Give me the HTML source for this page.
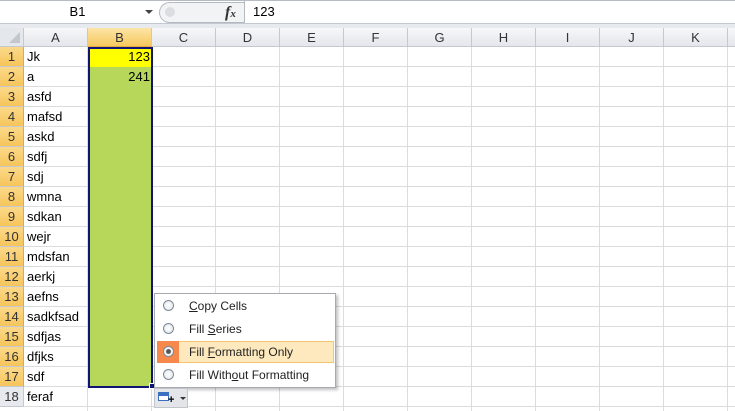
<!DOCTYPE html>
<html><head><meta charset="utf-8"><style>
*{margin:0;padding:0;box-sizing:border-box}
html,body{width:735px;height:411px;overflow:hidden}
body{background:#fff;font-family:"Liberation Sans",Arial,sans-serif;position:relative;font-size:13px;color:#000}
.a{position:absolute}
.grid{left:24px;top:47px;width:711px;height:364px;
background-image:linear-gradient(to right,transparent 63px,#dadcdd 63px),linear-gradient(to bottom,transparent 19px,#dadcdd 19px);
background-size:64px 20px,64px 20px}
.ch{top:28px;height:19px;background:linear-gradient(#f6f7f9,#e4e7eb);border-right:1px solid #c5c9cf;border-bottom:1px solid #c5c9cf;text-align:center;line-height:19px;color:#333;font-size:13px}
.rh{left:0;width:24px;height:20px;background:#e6e9ed;border-bottom:1px solid #c5c9cf;border-right:1px solid #c5c9cf;text-align:center;line-height:20px;color:#333;font-size:13px}
.rh.s{background:linear-gradient(#fbd98a,#f6c55b);border-right-color:#e2a93c}
.t{left:27px;height:20px;line-height:20px;font-size:13px}
.m{left:157px;height:22px;width:177px;line-height:22px;font-size:12px;color:#222;padding-left:32px}
.r{position:absolute;left:6px;top:5px;width:11px;height:11px;border-radius:50%;border:1px solid #7d8996;background:radial-gradient(#fff,#dfe3e8)}
u{text-decoration:underline}
</style></head><body>
<div class="a" style="left:0;top:0;width:735px;height:1px;background:#b7bcc4"></div>
<div class="a" style="left:0;top:23px;width:735px;height:5px;background:#e7eaee;border-top:1px solid #c4c9d0"></div>
<div class="a" style="left:0;top:1px;width:155px;height:22px;text-align:center;line-height:22px;font-size:13px">B1</div>
<div class="a" style="left:145px;top:10px;width:0;height:0;border-left:4px solid transparent;border-right:4px solid transparent;border-top:4px solid #444"></div>
<div class="a" style="left:159px;top:2px;width:85px;height:21px;border:1px solid #b4bac2;border-radius:11px 0 0 11px;background:#f2f3f5;border-right:none"></div>
<div class="a" style="left:165px;top:7px;width:10px;height:10px;border-radius:50%;background:#dadde1"></div>
<div class="a" style="left:225px;top:4px;font-family:'Liberation Serif',serif;font-style:italic;font-weight:bold;font-size:16px;color:#333">f<span style="font-size:11px">x</span></div>
<div class="a" style="left:244px;top:1px;width:491px;height:22px;border-left:1px solid #b4bac2"></div>
<div class="a" style="left:253px;top:1px;line-height:22px;font-size:13px">123</div>

<div class="a grid"></div>
<div class="a" style="left:88px;top:47px;width:64px;height:20px;background:#ffff00"></div>
<div class="a" style="left:88px;top:67px;width:64px;height:320px;background:#b7d75a"></div>

<div class="a ch" style="left:0;width:24px;background:#e4e7eb"><div style="position:absolute;right:3px;bottom:3px;width:0;height:0;border-left:11px solid transparent;border-bottom:11px solid #c3c7cc"></div></div>
<div class="a ch" style="left:24px;width:64px">A</div>
<div class="a ch" style="left:88px;width:64px;background:linear-gradient(#fce5a6,#f7c85e);border-bottom-color:#e2a93c">B</div>
<div class="a ch" style="left:152px;width:64px">C</div>
<div class="a ch" style="left:216px;width:64px">D</div>
<div class="a ch" style="left:280px;width:64px">E</div>
<div class="a ch" style="left:344px;width:64px">F</div>
<div class="a ch" style="left:408px;width:64px">G</div>
<div class="a ch" style="left:472px;width:64px">H</div>
<div class="a ch" style="left:536px;width:64px">I</div>
<div class="a ch" style="left:600px;width:64px">J</div>
<div class="a ch" style="left:664px;width:64px">K</div>
<div class="a ch" style="left:728px;width:10px"></div>

<div class="a rh s" style="top:47px">1</div><div class="a t" style="top:47px">Jk</div>
<div class="a rh s" style="top:67px">2</div><div class="a t" style="top:67px">a</div>
<div class="a rh s" style="top:87px">3</div><div class="a t" style="top:87px">asfd</div>
<div class="a rh s" style="top:107px">4</div><div class="a t" style="top:107px">mafsd</div>
<div class="a rh s" style="top:127px">5</div><div class="a t" style="top:127px">askd</div>
<div class="a rh s" style="top:147px">6</div><div class="a t" style="top:147px">sdfj</div>
<div class="a rh s" style="top:167px">7</div><div class="a t" style="top:167px">sdj</div>
<div class="a rh s" style="top:187px">8</div><div class="a t" style="top:187px">wmna</div>
<div class="a rh s" style="top:207px">9</div><div class="a t" style="top:207px">sdkan</div>
<div class="a rh s" style="top:227px">10</div><div class="a t" style="top:227px">wejr</div>
<div class="a rh s" style="top:247px">11</div><div class="a t" style="top:247px">mdsfan</div>
<div class="a rh s" style="top:267px">12</div><div class="a t" style="top:267px">aerkj</div>
<div class="a rh s" style="top:287px">13</div><div class="a t" style="top:287px">aefns</div>
<div class="a rh s" style="top:307px">14</div><div class="a t" style="top:307px">sadkfsad</div>
<div class="a rh s" style="top:327px">15</div><div class="a t" style="top:327px">sdfjas</div>
<div class="a rh s" style="top:347px">16</div><div class="a t" style="top:347px">dfjks</div>
<div class="a rh s" style="top:367px">17</div><div class="a t" style="top:367px">sdf</div>
<div class="a rh" style="top:387px">18</div><div class="a t" style="top:387px">feraf</div>

<div class="a" style="left:88px;top:47px;width:65px;height:341px;border:2px solid #101573"></div>
<div class="a" style="left:149px;top:383px;width:6px;height:6px;background:#101573;border:1px solid #fff"></div>
<div class="a" style="left:110px;top:47px;width:40px;height:20px;text-align:right;line-height:20px">123</div>
<div class="a" style="left:110px;top:67px;width:40px;height:20px;text-align:right;line-height:20px">241</div>

<div class="a" style="left:154px;top:293px;width:182px;height:95px;background:#fff;border:1px solid #a7abb0;box-shadow:2px 2px 3px rgba(0,0,0,.25)"></div>
<div class="a m" style="top:295px"><div class="r"></div><u>C</u>opy Cells</div>
<div class="a m" style="top:318px"><div class="r"></div>Fill <u>S</u>eries</div>
<div class="a" style="left:157px;top:341px;width:177px;height:22px;background:#fde9bd;border:1px solid #f1c76d"></div>
<div class="a" style="left:157px;top:341px;width:22px;height:22px;background:#f5884a"></div>
<div class="a m" style="top:341px"><div class="r" style="background:radial-gradient(#555 0,#555 2px,#fff 3px,#e6e6e6)"></div>Fill <u>F</u>ormatting Only</div>
<div class="a m" style="top:364px"><div class="r"></div>Fill With<u>o</u>ut Formatting</div>

<div class="a" style="left:154px;top:388px;width:34px;height:20px;background:#e3e5e8;border:1px solid #c2c6cb"></div>
<div class="a" style="left:158px;top:392px;width:11px;height:9px;border:1px solid #3a6fc1;background:linear-gradient(#3a6fc1 0 3px,#fff 3px)"></div>
<div class="a" style="left:168px;top:395px;font-size:11px;line-height:11px;font-weight:bold">+</div>
<div class="a" style="left:180px;top:397px;width:0;height:0;border-left:3px solid transparent;border-right:3px solid transparent;border-top:3px solid #333"></div>
</body></html>
